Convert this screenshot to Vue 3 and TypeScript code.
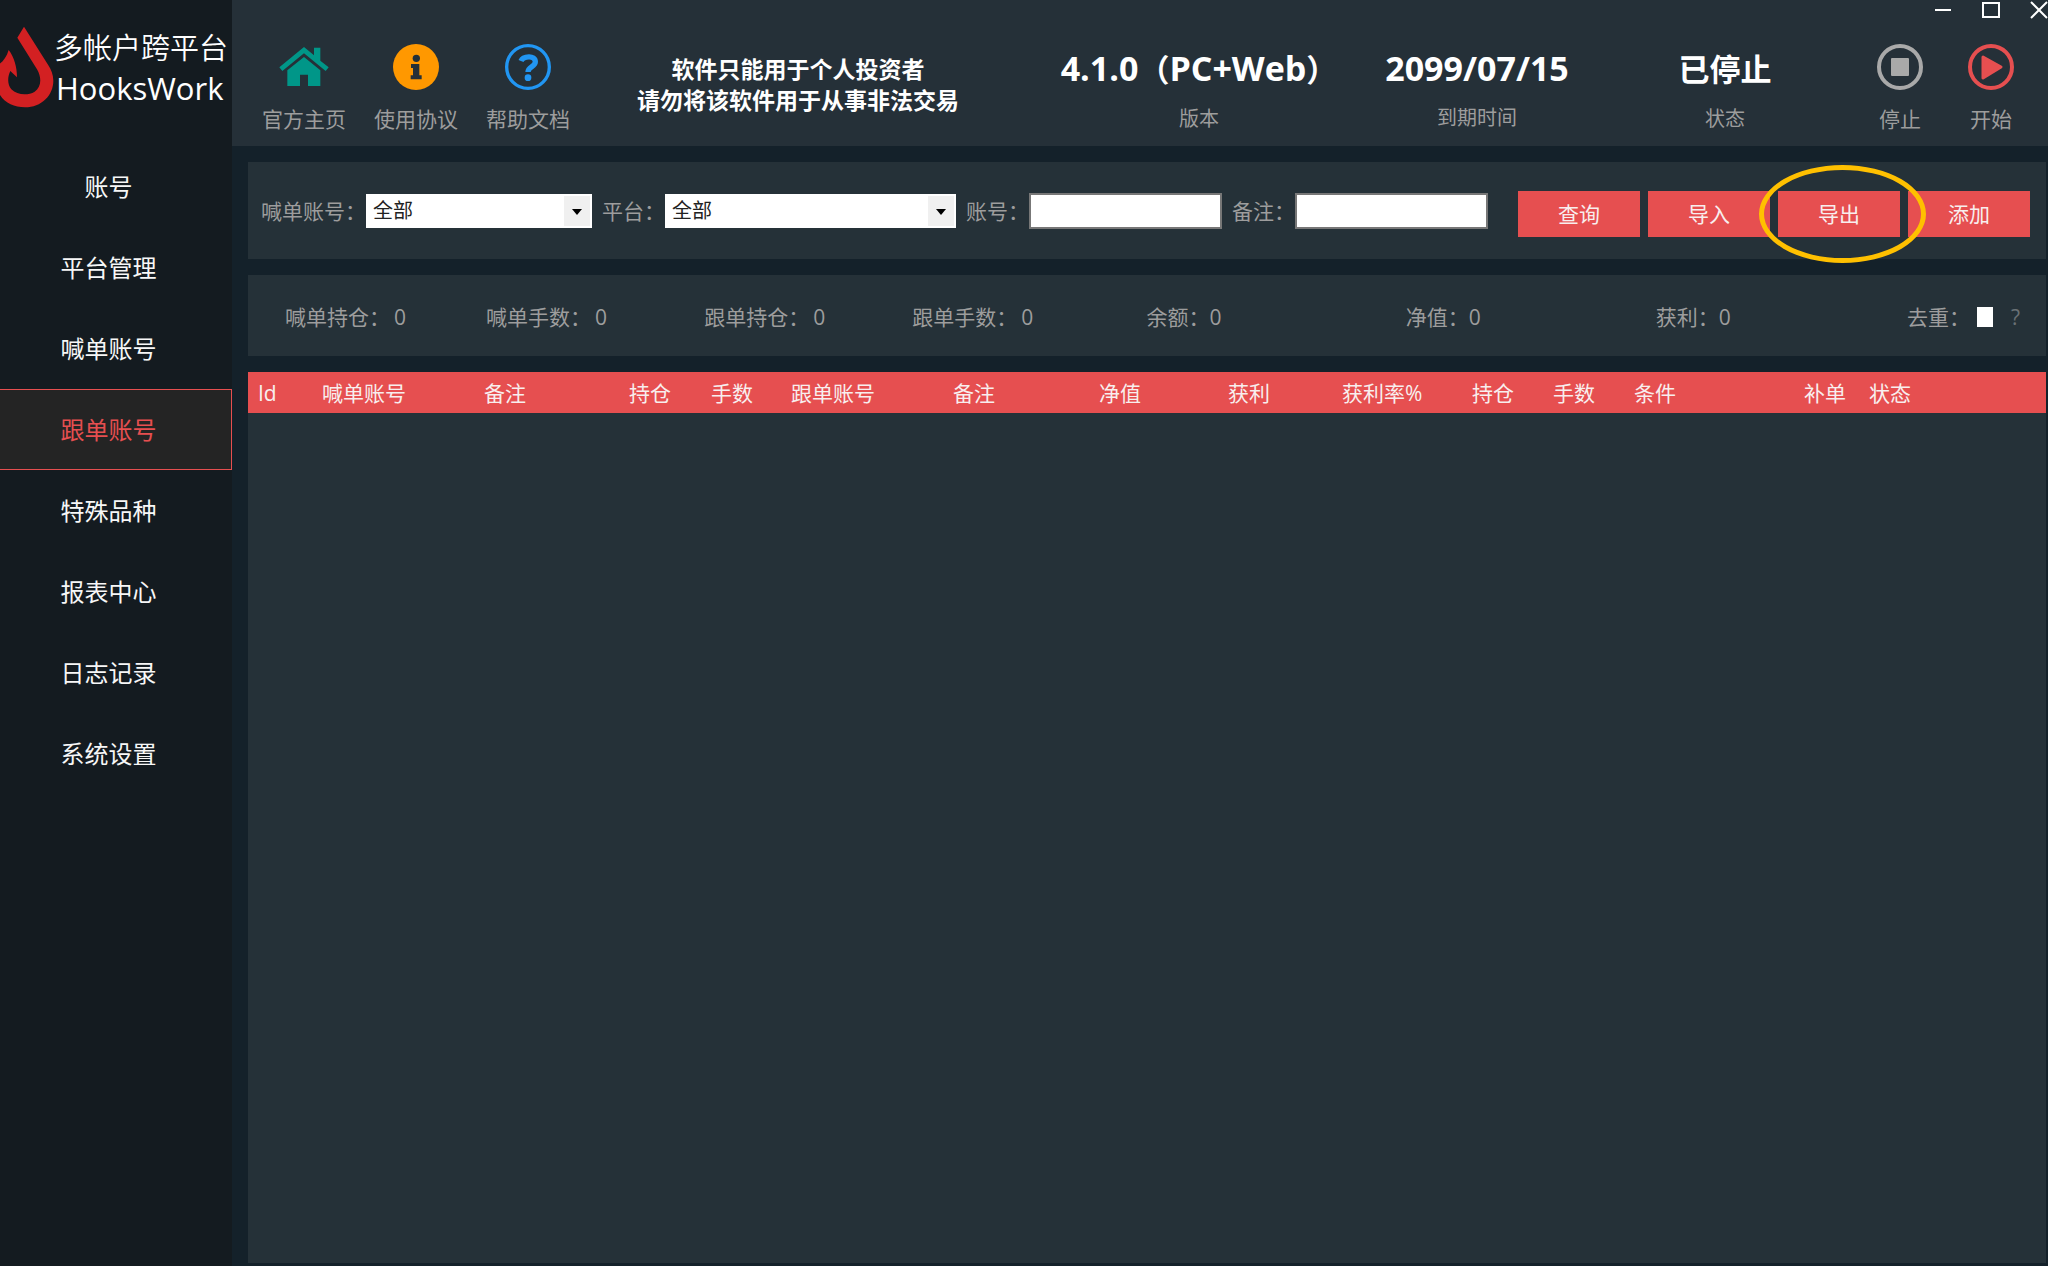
<script setup lang="ts">
import { ref } from 'vue'

interface Column {
  label: string
  width: number
}

const navItems: string[] = ['账号', '平台管理', '喊单账号', '跟单账号', '特殊品种', '报表中心', '日志记录', '系统设置']
const activeNav = ref('跟单账号')

const signalAccount = ref('全部')
const platform = ref('全部')
const account = ref('')
const remark = ref('')
const dedupe = ref(false)

const stats = [
  { label: '喊单持仓', value: 0 },
  { label: '喊单手数', value: 0 },
  { label: '跟单持仓', value: 0 },
  { label: '跟单手数', value: 0 },
  { label: '余额', value: 0 },
  { label: '净值', value: 0 },
  { label: '获利', value: 0 },
]

// Relative widths; each column takes its share of the table.
const columns: Column[] = [
  { label: 'Id', width: 64 },
  { label: '喊单账号', width: 162 },
  { label: '备注', width: 145 },
  { label: '持仓', width: 82 },
  { label: '手数', width: 80 },
  { label: '跟单账号', width: 162 },
  { label: '备注', width: 146 },
  { label: '净值', width: 129 },
  { label: '获利', width: 114 },
  { label: '获利率%', width: 130 },
  { label: '持仓', width: 81 },
  { label: '手数', width: 81 },
  { label: '条件', width: 170 },
  { label: '补单', width: 65 },
  { label: '状态', width: 187 },
]
const totalWidth = columns.reduce((sum, c) => sum + c.width, 0)
const share = (c: Column): string => `${(c.width / totalWidth) * 100}%`
</script>

<template>
  <div class="app">
    <aside class="sidebar">
      <div class="brand">
        <svg class="flame" viewBox="0 0 162 246" aria-hidden="true">
          <path
            fill="#d32022"
            d="M72 2 L52 35 L111 130 C126 156 124 184 104 197 C84 209 52 208 34 190 C22 176 22 153 31 135 L51 154 C51 124 43 94 26 72 C20 92 10 106 -2 114 V204 C14 232 42 244 75 244 C124 244 160 208 160 164 C160 146 153 130 145 118 Z"
          />
        </svg>
        <div class="brand-text">
          <span class="brand-cn">多帐户跨平台</span>
          <span class="brand-en">HooksWork</span>
        </div>
      </div>
      <nav class="nav">
        <button
          v-for="item in navItems"
          :key="item"
          type="button"
          class="nav-item"
          :class="{ active: item === activeNav }"
          @click="activeNav = item"
        >
          {{ item }}
        </button>
      </nav>
    </aside>

    <main class="main">
      <header class="header">
        <div class="links">
          <a class="action" href="#home">
            <svg class="icon" viewBox="58 31 138 138" aria-hidden="true">
              <g fill="#009688">
                <path d="M127 40 L157 65 V42 H176 V81 L201 101 L192 112 L127 59 L62 112 L53 101 Z" />
                <path d="M127 70 L176 110 V157 H139 V123 H115 V157 H77 V110 Z" />
              </g>
            </svg>
            <span>官方主页</span>
          </a>
          <a class="action" href="#agreement">
            <svg class="icon" viewBox="0 0 138 138" aria-hidden="true">
              <circle cx="69" cy="69" r="69" fill="#ff9800" />
              <g fill="#253038">
                <circle cx="70" cy="43" r="11" />
                <path d="M54 60 H79 V94 H86 V106 H53 V94 H60 V72 H54 Z" />
              </g>
            </svg>
            <span>使用协议</span>
          </a>
          <a class="action" href="#help">
            <svg class="icon" viewBox="0 0 138 138" aria-hidden="true">
              <circle cx="69" cy="69" r="64" fill="none" stroke="#2196f3" stroke-width="10" />
              <path
                d="M48 51 C54 36 91 32 91 53 C91 69 69 67 69 84"
                fill="none"
                stroke="#2196f3"
                stroke-width="16"
              />
              <circle cx="69" cy="101" r="10" fill="#2196f3" />
            </svg>
            <span>帮助文档</span>
          </a>
        </div>
        <div class="info">
          <p class="notice">软件只能用于个人投资者<br />请勿将该软件用于从事非法交易</p>
          <div class="metric">
            <strong>4.1.0<span class="cjk">（</span>PC+Web<span class="cjk">）</span></strong>
            <span>版本</span>
          </div>
          <div class="metric">
            <strong>2099/07/15</strong>
            <span>到期时间</span>
          </div>
          <div class="metric">
            <strong><span class="cjk">已停止</span></strong>
            <span>状态</span>
          </div>
        </div>
        <div class="controls">
          <button type="button" class="action">
            <svg class="icon" viewBox="0 0 46 46" aria-hidden="true">
              <circle cx="23" cy="23" r="21" fill="none" stroke="#a9a9a9" stroke-width="4" />
              <rect x="14" y="14" width="18" height="18" rx="1" fill="#a9a9a9" />
            </svg>
            <span>停止</span>
          </button>
          <button type="button" class="action">
            <svg class="icon" viewBox="0 0 46 46" aria-hidden="true">
              <circle cx="23" cy="23" r="21" fill="none" stroke="#e64f50" stroke-width="4" />
              <path
                d="M15 13 L33 23 L15 34 Z"
                fill="#e64f50"
                stroke="#e64f50"
                stroke-width="3"
                stroke-linejoin="round"
              />
            </svg>
            <span>开始</span>
          </button>
        </div>
        <div class="window-controls">
          <button type="button" aria-label="最小化">
            <svg viewBox="0 0 18 18"><path d="M1 9 H17" /></svg>
          </button>
          <button type="button" aria-label="最大化">
            <svg viewBox="0 0 18 18"><rect x="1" y="2" width="16" height="14" /></svg>
          </button>
          <button type="button" aria-label="关闭">
            <svg viewBox="0 0 18 18"><path d="M1 1 L17 17 M17 1 L1 17" /></svg>
          </button>
        </div>
      </header>

      <div class="content">
        <form class="panel filters" @submit.prevent>
          <label for="signal">喊单账号：</label>
          <div class="select signal">
            <select id="signal" v-model="signalAccount">
              <option>全部</option>
            </select>
          </div>
          <label for="platform">平台：</label>
          <div class="select platform">
            <select id="platform" v-model="platform">
              <option>全部</option>
            </select>
          </div>
          <label for="account">账号：</label>
          <input id="account" v-model="account" class="field" type="text" />
          <label for="remark">备注：</label>
          <input id="remark" v-model="remark" class="field" type="text" />
          <div class="buttons">
            <button type="submit" class="btn">查询</button>
            <button type="button" class="btn">导入</button>
            <button type="button" class="btn marked">导出</button>
            <button type="button" class="btn">添加</button>
          </div>
        </form>

        <section class="panel stats">
          <div v-for="stat in stats" :key="stat.label" class="stat">
            <span>{{ stat.label }}：</span><span>{{ stat.value }}</span>
          </div>
          <div class="dedupe">
            <label for="dedupe">去重：</label>
            <input id="dedupe" v-model="dedupe" type="checkbox" />
            <span class="hint">?</span>
          </div>
        </section>

        <section class="panel records">
          <table>
            <colgroup>
              <col v-for="(c, i) in columns" :key="i" :style="{ width: share(c) }" />
            </colgroup>
            <thead>
              <tr>
                <th v-for="(c, i) in columns" :key="i" scope="col">{{ c.label }}</th>
              </tr>
            </thead>
          </table>
        </section>
      </div>
    </main>
  </div>
</template>

<style>
body {
  margin: 0;
  background: #14212a;
}
</style>

<style scoped>
.app {
  display: flex;
  min-height: 100vh;
  background: #14212a;
  color: #9d9d9d;
  font-family: 'Open Sans', 'Noto Sans CJK SC', sans-serif;
  font-size: 21px;
  line-height: 30px;
  white-space: nowrap;
}

.app * {
  box-sizing: border-box;
}

button,
input,
select {
  margin: 0;
  padding: 0;
  border: 0;
  border-radius: 0;
  background: none;
  color: inherit;
  font: inherit;
}

.sidebar {
  flex: 0 0 232px;
  background: #141b20;
}

.brand {
  display: flex;
  height: 146px;
  padding-top: 26px;
}

.flame {
  flex: none;
  width: 54px;
  height: 82px;
}

.brand-text {
  display: flex;
  flex-direction: column;
  gap: 2px;
  color: #fff;
  line-height: 40px;
}

.brand-cn {
  font-family: 'Noto Sans CJK SC', sans-serif;
  font-size: 29px;
  font-weight: 350;
}

.brand-en {
  padding-left: 2px;
  font-size: 31px;
}

.nav {
  display: flex;
  flex-direction: column;
}

.nav-item {
  height: 81px;
  padding-right: 14px;
  border: 1px solid transparent;
  border-left: 0;
  color: #f7f7f7;
  font-size: 24px;
}

.nav-item.active {
  border-color: #e64f50;
  background: #242424;
  color: #e64f50;
}

.main {
  display: flex;
  flex: 1;
  flex-direction: column;
  min-width: 0;
}

.header {
  position: relative;
  display: flex;
  height: 146px;
  padding: 44px 15px 0 30px;
  background: #253038;
}

.links {
  display: flex;
  gap: 28px;
}

.action {
  display: flex;
  flex-direction: column;
  align-items: center;
  gap: 14px;
  width: 84px;
  height: 90px;
  color: inherit;
  text-decoration: none;
}

.icon {
  flex: none;
  width: 46px;
  height: 46px;
  overflow: visible;
}

.info {
  display: grid;
  flex: 1;
  grid-template-columns: 456fr 346fr 210fr 276fr;
}

.notice {
  margin: 0;
  padding-top: 10px;
  color: #fff;
  font-size: 23px;
  font-weight: 700;
  line-height: 31px;
  text-align: center;
}

.metric {
  display: flex;
  flex-direction: column;
  align-items: center;
  gap: 12px;
  padding-top: 1px;
  font-size: 20px;
}

.metric:last-child {
  padding-left: 10px;
}

.metric strong {
  color: #fff;
  font-size: 34px;
  line-height: 46px;
}

.metric .cjk {
  font-size: 31px;
}

.controls {
  display: flex;
  gap: 7px;
}

.window-controls {
  position: absolute;
  top: 0;
  right: 0;
  display: flex;
  gap: 30px;
}

.window-controls button {
  width: 18px;
  height: 19px;
}

.window-controls svg {
  display: block;
  width: 18px;
  height: 18px;
  fill: none;
  stroke: #fff;
  stroke-width: 2;
}

.content {
  display: flex;
  flex: 1;
  flex-direction: column;
  gap: 16px;
  padding: 16px 2px 3px 16px;
}

.panel {
  background: #253138;
}

.filters {
  display: flex;
  align-items: center;
  height: 97px;
  padding: 0 16px 0 13px;
}

.filters > label {
  flex: none;
}

.select {
  position: relative;
  height: 34px;
  margin-right: 10px;
  border: 2px solid #fff;
  background: linear-gradient(#f0f0f0, #f0f0f0) right / 26px 100% no-repeat #fff;
  color: #222;
  font-size: 20px;
}

.select::after {
  position: absolute;
  top: 13px;
  right: 8px;
  border: 5px solid transparent;
  border-top: 6px solid #000;
  border-bottom: 0;
  content: '';
  pointer-events: none;
}

.select select {
  width: 100%;
  height: 30px;
  padding-left: 5px;
  appearance: none;
}

.signal {
  flex: 1 1 226px;
}

.platform {
  flex: 1 1 291px;
}

.field {
  flex: 1 1 193px;
  min-width: 0;
  height: 36px;
  margin-right: 10px;
  padding: 0 6px;
  border: 2px solid #777;
  background: #fff;
  color: #222;
}

.buttons {
  display: flex;
  gap: 8px;
  margin: 6px 0 0 20px;
}

.btn {
  position: relative;
  width: 122px;
  height: 46px;
  background: #e64f50;
  color: #f8eeee;
}

.marked::after {
  position: absolute;
  z-index: 1;
  inset: -26px -26px -26px -19px;
  border: 5px solid #ffc000;
  border-radius: 50%;
  content: '';
  pointer-events: none;
}

.stats {
  display: grid;
  grid-template-columns: 201fr 218fr 208fr 234fr 259fr 250fr 251fr 124fr;
  align-items: center;
  height: 81px;
  padding: 3px 15px 0 37px;
}

.stat {
  display: flex;
}

.stat:nth-child(-n + 4) {
  gap: 4px;
}

.dedupe {
  display: flex;
  align-items: center;
}

.dedupe input {
  width: 16px;
  height: 20px;
  margin: 0 18px 0 7px;
  background: #fff;
  appearance: none;
}

.dedupe input:checked {
  background: #e64f50;
}

.hint {
  color: #6b7175;
}

.records {
  flex: 1;
}

table {
  width: 100%;
  border-collapse: collapse;
  table-layout: fixed;
}

th {
  height: 41px;
  padding: 0 0 0 10px;
  background: #e64f50;
  color: #f8eeee;
  font-weight: 400;
  text-align: left;
}
</style>
